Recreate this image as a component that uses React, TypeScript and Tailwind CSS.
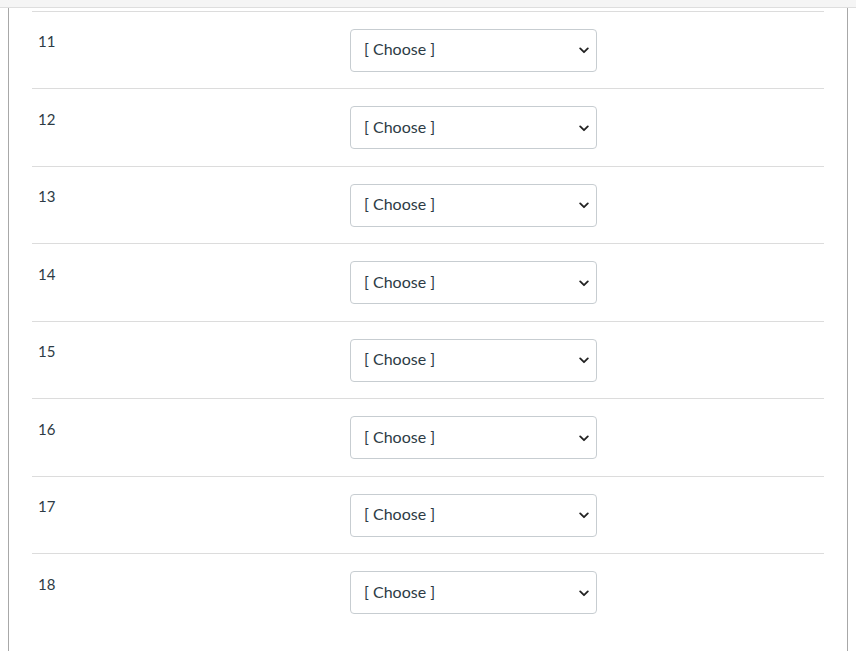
import React from "react"

const rows = [11, 12, 13, 14, 15, 16, 17, 18]

function ChooseSelect() {
  return (
    <div className="flex h-[43px] w-[247px] items-center justify-between rounded-[4px] border border-[#c7cdd1] bg-white pl-[13px] pr-[7px]">
      <span className="mb-[2px] text-[16px] text-[#2d3b45]">[ Choose ]</span>
      <svg width="10" height="7" viewBox="0 0 10 7" fill="none" className="mt-[1px]">
        <path d="M1.2 1.4 5 5.2 8.8 1.4" stroke="#222" strokeWidth="1.8" strokeLinecap="round" strokeLinejoin="round" />
      </svg>
    </div>
  )
}

export default function App() {
  return (
    <div className="min-h-[651px] bg-white" style={{ fontFamily: "Lato, 'Liberation Sans', sans-serif" }}>
      <div className="h-[8px] border-b border-[#dedede] bg-[#f5f5f5]" />
      <div className="mx-[8px] min-h-[643px] border-x border-[#a8a8a8] px-[23px] pt-[2.6px]">
        {rows.map((n) => (
          <div key={n} className="flex border-t border-[#dcdcdc] pt-[17px] pb-[16.5px]">
            <div className="w-[318px] shrink-0 pl-[6px] pt-[1.5px] text-[15px] text-[#2d3b45]">{n}</div>
            <ChooseSelect />
          </div>
        ))}
      </div>
    </div>
  )
}
